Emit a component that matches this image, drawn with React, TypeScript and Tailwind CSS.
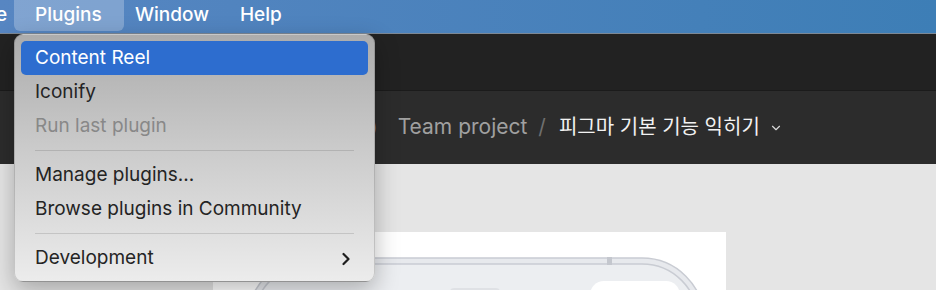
import { ChevronRight, ChevronDown } from 'lucide-react';

const sans = { fontFamily: 'Inter, "Noto Sans CJK KR", "Noto Sans", sans-serif' };

function MenuItem({ label, active, disabled, submenu }: { label: string; active?: boolean; disabled?: boolean; submenu?: boolean }) {
  return (
    <div
      className={`flex h-[34px] items-center justify-between rounded-[5px] pl-[14px] pr-[12px] pt-[1px] text-[19px] ${
        active ? 'bg-[#2d6dcf] text-white' : disabled ? 'text-[#888888]' : 'text-[#242424]'
      }`}
    >
      <span>{label}</span>
      {submenu && <ChevronRight size={20} strokeWidth={2.6} className="text-[#1d1d1d]" />}
    </div>
  );
}

function Separator() {
  return (
    <div className="flex h-[15px] items-center px-[14px]">
      <div className="h-px w-full bg-black/12" />
    </div>
  );
}

function PhoneSketch() {
  return (
    <svg width="513" height="60" viewBox="0 0 513 60" className="block">
      <rect x="35" y="26" width="456" height="200" rx="62" fill="#e7e9ed" stroke="#c9ccd3" strokeWidth="1.5" />
      <rect x="41" y="32" width="444" height="190" rx="56" fill="#eceef1" stroke="#c9ccd3" strokeWidth="1.5" />
      <rect x="394" y="25" width="5" height="8" fill="#c4c7ce" />
      <rect x="377" y="49" width="90" height="40" rx="14" fill="#ffffff" />
      <rect x="237" y="56" width="50" height="10" rx="4" fill="#dfe1e5" />
    </svg>
  );
}

export default function App() {
  return (
    <div className="relative h-[290px] w-[936px] overflow-hidden bg-[#e5e5e5]" style={sans}>
      {/* menu bar */}
      <div className="flex h-[34px] items-start border-b border-[#7d8894] bg-linear-to-r from-[#5786c2] to-[#3d7eb6] text-[19px] font-medium text-white">
        <span className="ml-[-4px] mt-[1px] w-[18px]">e</span>
        <div className="h-[31px] w-[110px] rounded-b-[6px] bg-white/25 pl-[21px] pt-[1px]">Plugins</div>
        <span className="ml-[11px] mt-[1px]">Window</span>
        <span className="ml-[31px] mt-[1px]">Help</span>
      </div>

      {/* dark band */}
      <div className="h-[56px] bg-[#222222]" />

      {/* toolbar */}
      <div className="flex h-[74px] items-center border-t border-[#1b1b1b] bg-[#2c2c2c] pb-[2px] text-[21px]">
        <span className="ml-[370px] text-[#8f8f8f]">)</span>
        <span className="ml-[20px] text-[#a0a0a0]">Team project</span>
        <span className="ml-[11px] text-[#6f6f6f]">/</span>
        <span className="ml-[13px] text-[20px] text-[#f2f2f2]">피그마 기본 기능 익히기</span>
        <ChevronDown size={14} strokeWidth={2} className="ml-[9px] mt-[2px] text-[#d8d8d8]" />
      </div>

      {/* canvas */}
      <div className="pl-[213px] pt-[68px]">
        <div className="h-[60px] w-[513px] bg-white">
          <PhoneSketch />
        </div>
      </div>

      {/* dropdown */}
      <div className="absolute left-[14px] top-[34px] w-[361px] rounded-[9px] border border-black/15 bg-linear-to-b from-[#acacac] via-[#cacaca] via-45% to-[#ececec] px-[6px] py-[6px] shadow-[0_8px_24px_rgba(0,0,0,0.28)]">
        <MenuItem label="Content Reel" active />
        <MenuItem label="Iconify" />
        <MenuItem label="Run last plugin" disabled />
        <Separator />
        <MenuItem label="Manage plugins..." />
        <MenuItem label="Browse plugins in Community" />
        <Separator />
        <MenuItem label="Development" submenu />
      </div>
    </div>
  );
}
